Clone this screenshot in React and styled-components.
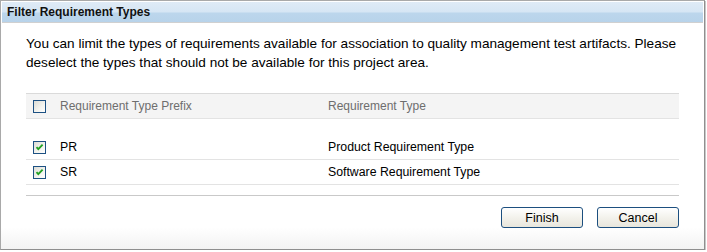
import React from "react";
import styled, { createGlobalStyle } from "styled-components";

const GlobalStyle = createGlobalStyle`
  html, body {
    margin: 0;
    padding: 0;
    background: #ffffff;
  }
  body {
    font-family: "Liberation Sans", Arial, sans-serif;
    font-size: 12px;
    color: #000;
  }
`;

const Dialog = styled.div`
  box-sizing: border-box;
  width: 705px;
  height: 250px;
  border: 1px solid #a9a9a9;
  border-right-color: #8f8f8f;
  border-bottom-color: #8f8f8f;
  box-shadow: 1px 1px 0 #c8c8c8;
  padding: 1px;
  display: flex;
  flex-direction: column;
  background: linear-gradient(to bottom, #ffffff 0, #ffffff 226px, #f3f3f3 100%);
`;

const TitleBar = styled.div`
  height: 20px;
  line-height: 20px;
  padding-left: 5px;
  font-size: 12px;
  font-weight: bold;
  color: #111;
  background: linear-gradient(to bottom, #dfebf6 0, #d6e6f4 50%, #bcd6ec 55%, #b8d3ea 100%);
  border-bottom: 1px solid #d0d0d0;
`;

const Body = styled.div`
  padding: 11px 24px 0 24px;
  display: flex;
  flex-direction: column;
`;

const Intro = styled.p`
  margin: 0;
  font-size: 13.6px;
  line-height: 19px;
  color: #000;
`;

const Table = styled.div`
  margin-top: 21px;
  width: 653px;
`;

const Row = styled.div`
  display: grid;
  grid-template-columns: 34px 268px 1fr;
  align-items: center;
  height: 24px;
  border-bottom: 1px solid #e3e3e3;
  background: ${(p) => (p.$header ? "#f4f4f4" : "transparent")};
  border-top: ${(p) => (p.$header ? "1px solid #dadada" : "none")};
  color: ${(p) => (p.$header ? "#6e6e6e" : "#000")};
`;

const Spacer = styled.div`
  height: 16px;
`;

const Cell = styled.div`
  font-size: ${(p) => (p.$header ? "12px" : "12.3px")};
  white-space: nowrap;
`;

const Box = styled.span`
  display: block;
  box-sizing: border-box;
  width: 13px;
  height: 13px;
  margin-left: 7px;
  border: 1px solid #1d5183;
  background: linear-gradient(135deg, #dcdcd5 0%, #f4f4f0 60%, #ffffff 100%);
  position: relative;
`;

const Check = () => (
  <svg width="11" height="11" viewBox="0 0 11 11" style={{ position: "absolute", left: 0, top: 0 }}>
    <path d="M2.5 5.2 L4.3 7.2 L8.6 2.6" fill="none" stroke="#21a121" strokeWidth="1.8" />
  </svg>
);

const Separator = styled.div`
  margin-top: 10px;
  width: 653px;
  border-top: 1px solid #c9c9c9;
`;

const Footer = styled.div`
  display: flex;
  justify-content: flex-end;
  gap: 14px;
  padding: 11px 24px 0 0;
`;

const Button = styled.button`
  box-sizing: border-box;
  width: 82px;
  height: 21px;
  padding: 0;
  border: 1px solid #1c4f7f;
  border-radius: 3px;
  background: linear-gradient(to bottom, #ffffff 0%, #f3f2ec 50%, #e8e6dc 100%);
  font-family: "Liberation Sans", Arial, sans-serif;
  font-size: 12.5px;
  color: #000;
`;

const rows = [
  { prefix: "PR", type: "Product Requirement Type" },
  { prefix: "SR", type: "Software Requirement Type" },
];

export default function App() {
  return (
    <>
      <GlobalStyle />
      <Dialog>
        <TitleBar>Filter Requirement Types</TitleBar>
        <Body>
          <Intro>
            You can limit the types of requirements available for association to quality management test artifacts. Please
            <br />
            deselect the types that should not be available for this project area.
          </Intro>
          <Table>
            <Row $header>
              <Box />
              <Cell $header>Requirement Type Prefix</Cell>
              <Cell $header>Requirement Type</Cell>
            </Row>
            <Spacer />
            {rows.map((r) => (
              <Row key={r.prefix}>
                <Box>
                  <Check />
                </Box>
                <Cell>{r.prefix}</Cell>
                <Cell>{r.type}</Cell>
              </Row>
            ))}
          </Table>
          <Separator />
        </Body>
        <Footer>
          <Button>Finish</Button>
          <Button>Cancel</Button>
        </Footer>
      </Dialog>
    </>
  );
}
